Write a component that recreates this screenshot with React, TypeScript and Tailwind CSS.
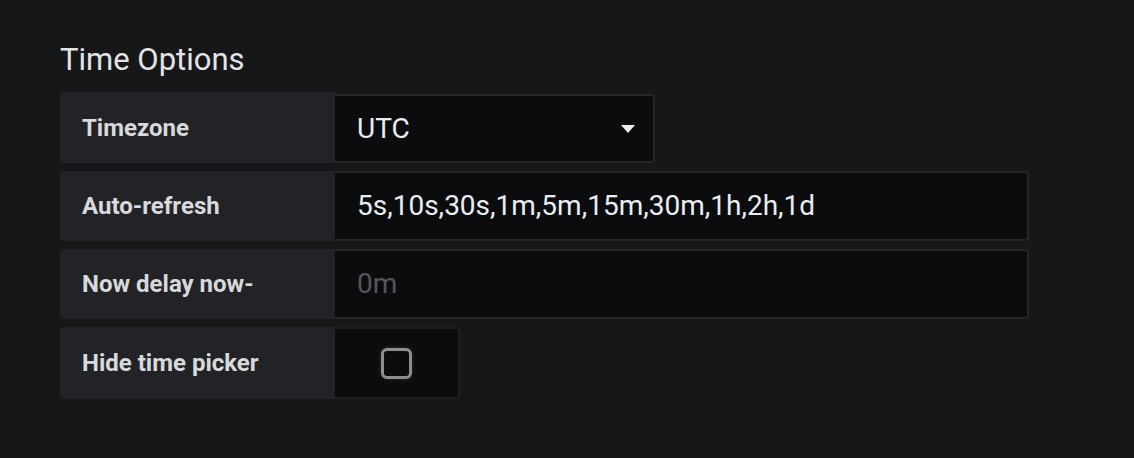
import React from "react";

const font = { fontFamily: "Roboto, 'Noto Sans', sans-serif" };

function Label({ children }: { children: React.ReactNode }) {
  return (
    <div className="flex h-full w-[275px] shrink-0 items-center rounded-l-[4px] bg-[#222327] pl-[22px] text-[24px] font-bold text-[#d8d9da]">
      {children}
    </div>
  );
}

export default function App() {
  return (
    <div
      className="min-h-[458px] w-full bg-[#161719] pl-[60px] pt-[42px]"
      style={font}
    >
      <h2 className="mb-[14px] text-[31px] leading-[36px] font-normal text-[#e3e4e6]">
        Time Options
      </h2>

      <div className="flex flex-col gap-[8px]">
        <div className="flex h-[71px]">
          <Label>Timezone</Label>
          <div className="mt-[2px] flex w-[320px] items-center justify-between rounded-r-[4px] border-2 border-l-0 border-[#262628] bg-[#0b0c0e] pl-[22px] pr-[18px] text-[28px] text-[#e9edf2]">
            <span>UTC</span>
            <svg width="14" height="8" viewBox="0 0 14 8">
              <path d="M0 0 L14 0 L7 8 Z" fill="#e9edf2" />
            </svg>
          </div>
        </div>

        <div className="flex h-[70px]">
          <Label>Auto-refresh</Label>
          <div className="flex w-[694px] items-center rounded-r-[4px] border-2 border-l-0 border-[#262628] bg-[#0b0c0e] pl-[22px] text-[28px] text-[#e9edf2]">
            5s,10s,30s,1m,5m,15m,30m,1h,2h,1d
          </div>
        </div>

        <div className="flex h-[70px]">
          <Label>Now delay now-</Label>
          <div className="flex w-[694px] items-center rounded-r-[4px] border-2 border-l-0 border-[#262628] bg-[#0b0c0e] pl-[22px] text-[28px] text-[#55575b]">
            0m
          </div>
        </div>

        <div className="flex h-[72px]">
          <Label>Hide time picker</Label>
          <div className="flex w-[125px] items-center justify-center rounded-r-[4px] border-2 border-l-0 border-[#1f1f22] bg-[#0b0c0e]">
            <div className="h-[31px] w-[31px] rounded-[6px] border-[3px] border-[#8e8e8e] shadow-[0_0_4px_rgba(255,255,255,0.15)]" />
          </div>
        </div>
      </div>
    </div>
  );
}
